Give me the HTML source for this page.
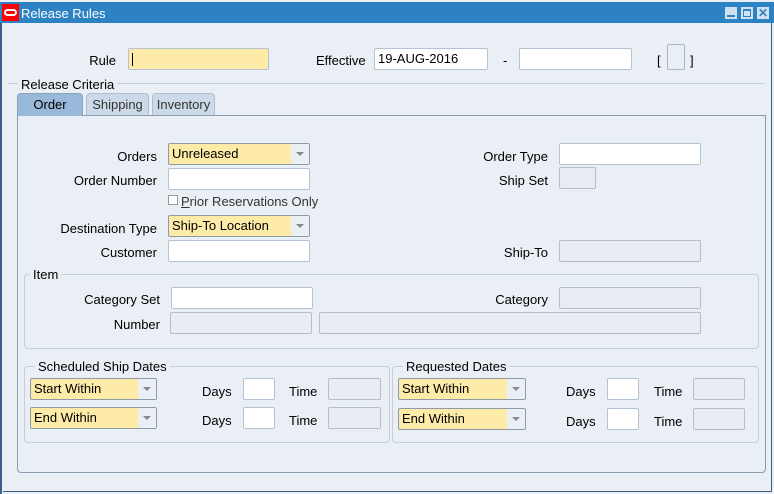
<!DOCTYPE html>
<html><head><style>
*{margin:0;padding:0;box-sizing:border-box}
body{width:774px;height:494px;background:#eaeef5;font-family:"Liberation Sans",Arial,sans-serif;font-size:13px;color:#000;position:relative;overflow:hidden}
.a{position:absolute}
.lbl{position:absolute;white-space:nowrap;line-height:15px}
.r{text-align:right}
.f{position:absolute;background:#fff;border:1px solid #b5c2d1;border-radius:2px;height:22px}
.d{position:absolute;background:#e9edf3;border:1px solid #b4bec8;border-radius:2px;height:22px}
.y{position:absolute;background:#ffeba8;border:1px solid #b5c2d1;border-radius:2px;height:22px;line-height:20px;padding-left:4px}
.s{position:absolute;background:#ffeba8;border:1px solid #8e9aa8;border-radius:2px;height:22px;line-height:20px;padding-left:3px}
.s:after{content:"";position:absolute;right:0;top:0;width:18px;height:20px;background:#eaeef5}
.s i{position:absolute;right:5px;top:8px;width:0;height:0;border-left:4px solid transparent;border-right:4px solid transparent;border-top:4px solid #888;z-index:2}
.g{position:absolute;border:1px solid #c3cfdd;border-radius:4px}
.gl{position:absolute;background:#eaeef5;padding:0 3px;line-height:15px}
</style></head><body>
<div class="a" style="left:0;top:0;width:774px;height:3px;background:#eaeef5"></div>
<div class="a" style="left:0;top:2px;width:774px;height:21px;background:#2d82c4"></div>
<div class="a" style="left:2px;top:4px;width:17px;height:17px;background:#f00"></div>
<div class="a" style="left:4px;top:9px;width:13px;height:7px;border:2px solid #fff;border-radius:4px"></div>
<div class="lbl" style="left:21px;top:6px;color:#fff;font-size:13px">Release Rules</div>
<div class="a" style="left:725px;top:7px;width:12px;height:12px;background:#cfe0f0"><div class="a" style="left:2px;top:8px;width:8px;height:2px;background:#2d82c4"></div></div>
<div class="a" style="left:741px;top:7px;width:12px;height:12px;background:#cfe0f0"><div class="a" style="left:2px;top:2px;width:8px;height:8px;border:1px solid #2d82c4;border-top-width:2px"></div></div>
<div class="a" style="left:757px;top:7px;width:12px;height:12px;background:#cfe0f0;color:#2d82c4;font-size:12px;line-height:12px;text-align:center;font-weight:bold">✕</div>
<div class="a" style="left:0;top:23px;width:2px;height:471px;background:#3e5f88"></div>
<div class="a" style="left:3px;top:491px;width:768px;height:1px;background:#3e5f88"></div>
<div class="a" style="left:771px;top:23px;width:1px;height:469px;background:#3e5f88"></div>

<div class="lbl r" style="left:60px;top:53px;width:56px">Rule</div>
<div class="y" style="left:128px;top:48px;width:141px"><div class="a" style="left:3px;top:4px;width:1px;height:13px;background:#000"></div></div>
<div class="lbl" style="left:316px;top:53px">Effective</div>
<div class="f" style="left:374px;top:48px;width:114px;line-height:20px;padding-left:3px">19-AUG-2016</div>
<div class="lbl" style="left:503px;top:53px">-</div>
<div class="f" style="left:519px;top:48px;width:113px"></div>
<div class="lbl" style="left:657px;top:53px">[</div>
<div class="a" style="left:667px;top:44px;width:18px;height:26px;border:1px solid #a9b6c3;border-radius:2px"></div>
<div class="lbl" style="left:690px;top:53px">]</div>

<div class="a" style="left:8px;top:83px;width:757px;height:1px;background:#c3cfdd"></div>
<div class="gl" style="left:18px;top:77px">Release Criteria</div>

<div class="a" style="left:17px;top:115px;width:749px;height:358px;border:1px solid #8a9bb0;border-radius:0 0 4px 4px"></div>
<div class="a" style="left:17px;top:93px;width:66px;height:23px;background:#98b9d9;border:1px solid #8aa3bd;border-bottom:none;border-radius:4px 4px 0 0;text-align:center;line-height:22px">Order</div>
<div class="a" style="left:86px;top:93px;width:63px;height:22px;background:#ccd9e8;border:1px solid #b0bfd0;border-bottom:none;border-radius:4px 4px 0 0;text-align:center;line-height:22px;color:#333">Shipping</div>
<div class="a" style="left:152px;top:93px;width:63px;height:22px;background:#ccd9e8;border:1px solid #b0bfd0;border-bottom:none;border-radius:4px 4px 0 0;text-align:center;line-height:22px;color:#333">Inventory</div>

<div class="lbl r" style="left:40px;top:149px;width:117px">Orders</div>
<div class="s" style="left:168px;top:143px;width:142px">Unreleased<i></i></div>
<div class="lbl r" style="left:40px;top:173px;width:117px">Order Number</div>
<div class="f" style="left:168px;top:168px;width:142px"></div>
<div class="a" style="left:168px;top:195px;width:10px;height:10px;border:1px solid #999;background:#fff"></div>
<div class="lbl" style="left:181px;top:194px;color:#333"><u>P</u>rior Reservations Only</div>
<div class="lbl r" style="left:20px;top:221px;width:137px">Destination Type</div>
<div class="s" style="left:168px;top:215px;width:142px">Ship-To Location<i></i></div>
<div class="lbl r" style="left:40px;top:245px;width:117px">Customer</div>
<div class="f" style="left:168px;top:240px;width:142px"></div>

<div class="lbl r" style="left:420px;top:149px;width:128px">Order Type</div>
<div class="f" style="left:559px;top:143px;width:142px"></div>
<div class="lbl r" style="left:420px;top:173px;width:128px">Ship Set</div>
<div class="d" style="left:559px;top:167px;width:37px"></div>
<div class="lbl r" style="left:420px;top:245px;width:128px">Ship-To</div>
<div class="d" style="left:559px;top:240px;width:142px"></div>

<div class="g" style="left:24px;top:274px;width:735px;height:75px"></div>
<div class="gl" style="left:30px;top:267px">Item</div>
<div class="lbl r" style="left:40px;top:292px;width:120px">Category Set</div>
<div class="f" style="left:171px;top:287px;width:142px"></div>
<div class="lbl r" style="left:420px;top:292px;width:128px">Category</div>
<div class="d" style="left:559px;top:287px;width:142px"></div>
<div class="lbl r" style="left:40px;top:317px;width:120px">Number</div>
<div class="d" style="left:170px;top:312px;width:142px"></div>
<div class="d" style="left:319px;top:312px;width:382px"></div>

<div class="g" style="left:24px;top:366px;width:366px;height:77px"></div>
<div class="gl" style="left:35px;top:359px">Scheduled Ship Dates</div>
<div class="s" style="left:30px;top:378px;width:127px">Start Within<i></i></div>
<div class="s" style="left:30px;top:407px;width:127px">End Within<i></i></div>
<div class="lbl" style="left:202px;top:384px">Days</div>
<div class="f" style="left:243px;top:378px;width:32px"></div>
<div class="lbl" style="left:289px;top:384px">Time</div>
<div class="d" style="left:328px;top:378px;width:53px"></div>
<div class="lbl" style="left:202px;top:413px">Days</div>
<div class="f" style="left:243px;top:407px;width:32px"></div>
<div class="lbl" style="left:289px;top:413px">Time</div>
<div class="d" style="left:328px;top:407px;width:53px"></div>

<div class="g" style="left:392px;top:366px;width:367px;height:77px"></div>
<div class="gl" style="left:403px;top:359px">Requested Dates</div>
<div class="s" style="left:398px;top:378px;width:128px">Start Within<i></i></div>
<div class="s" style="left:398px;top:408px;width:128px">End Within<i></i></div>
<div class="lbl" style="left:566px;top:384px">Days</div>
<div class="f" style="left:607px;top:378px;width:32px"></div>
<div class="lbl" style="left:654px;top:384px">Time</div>
<div class="d" style="left:693px;top:378px;width:52px"></div>
<div class="lbl" style="left:566px;top:414px">Days</div>
<div class="f" style="left:607px;top:408px;width:32px"></div>
<div class="lbl" style="left:654px;top:414px">Time</div>
<div class="d" style="left:693px;top:408px;width:52px"></div>
</body></html>
